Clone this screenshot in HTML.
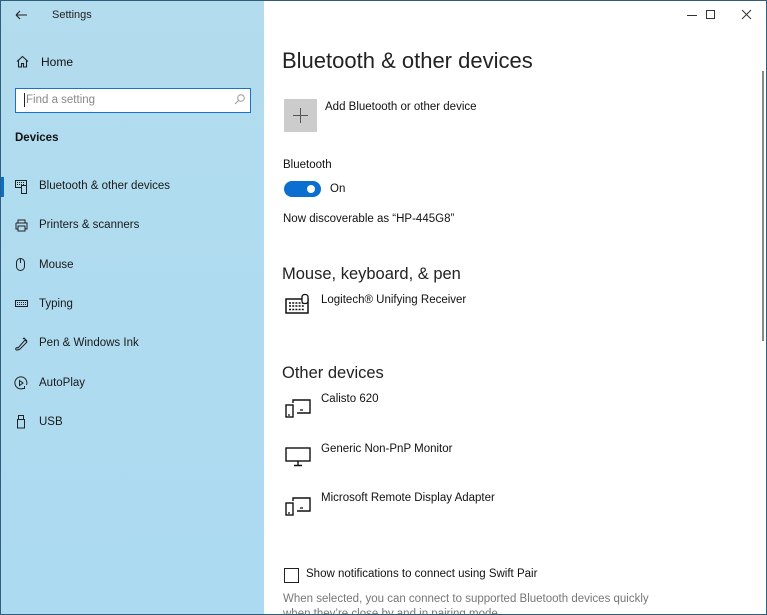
<!DOCTYPE html>
<html><head><meta charset="utf-8"><style>
*{margin:0;padding:0;box-sizing:border-box}
html,body{width:767px;height:615px;overflow:hidden;background:#fff;font-family:"Liberation Sans",sans-serif;color:#000}
#win{position:absolute;left:0;top:0;width:767px;height:615px;border:1px solid #2f5d7c;overflow:hidden}
#side{position:absolute;left:0;top:0;width:263px;height:613px;background:linear-gradient(180deg,#b3dcee 0%,#aedbf0 60%,#acdaf0 100%)}
#main{position:absolute;left:263px;top:0;width:502px;height:613px;background:#fff;overflow:hidden}
.t{position:absolute;white-space:nowrap}
.nav{position:absolute;left:38px;font-size:11.5px;color:#1a1a1a}
svg{position:absolute;overflow:visible}
</style></head><body><div id="win">
<div id="side">
  <svg style="left:14px;top:9px" width="12" height="10"><path d="M1 5H12M1 5L5 1M1 5L5 9" stroke="#222" stroke-width="1.1" fill="none"/></svg>
  <div class="t" style="left:51px;top:8px;font-size:11px;color:#222">Settings</div>
  <svg style="left:15px;top:54px" width="13" height="13"><path d="M1 6.5L6.5 1.5L12 6.5M2.5 5V12H5.5V8.5H7.5V12H10.5V5" stroke="#222" stroke-width="1.1" fill="none"/></svg>
  <div class="t" style="left:40px;top:54px;font-size:12px;color:#111">Home</div>
  <div style="position:absolute;left:14px;top:87px;width:236px;height:25px;background:#fff;border:1.5px solid #1a73c9"></div>
  <div style="position:absolute;left:23px;top:92px;width:1px;height:14px;background:#222"></div>
  <div class="t" style="left:25px;top:93px;font-size:11.5px;color:#888">Find a setting</div>
  <svg style="left:233px;top:93px" width="11" height="11"><circle cx="7" cy="4" r="3.3" stroke="#999" fill="none"/><path d="M4.6 6.4L1 10" stroke="#999"/></svg>
  <div class="t" style="left:14px;top:131px;font-size:11.5px;font-weight:bold;color:#111">Devices</div>
  <div style="position:absolute;left:0;top:176px;width:3px;height:20px;background:#0a6fc7"></div>
  <svg style="left:14px;top:179px" width="14" height="14"><rect x="0.5" y="0.5" width="11" height="7" fill="none" stroke="#222"/><path d="M2 2.5h8M2 4.5h8" stroke="#222" stroke-dasharray="1 1"/><rect x="6.5" y="5.5" width="5" height="8" fill="#b3dcee" stroke="#222"/></svg>
  <div class="nav" style="top:179px">Bluetooth &amp; other devices</div>
  <svg style="left:14px;top:218px" width="13" height="13"><path d="M3 4V1H10V4M1 4H12V10H10M3 10H1V4M3 7H10V12H3Z" stroke="#222" fill="none"/></svg>
  <div class="nav" style="top:218px">Printers &amp; scanners</div>
  <svg style="left:15px;top:257px" width="10" height="14"><rect x="0.5" y="0.5" width="8" height="12" rx="4" fill="none" stroke="#222"/><path d="M4.5 1V5" stroke="#222"/></svg>
  <div class="nav" style="top:258px">Mouse</div>
  <svg style="left:14px;top:299px" width="13" height="8"><rect x="0.5" y="0.5" width="12" height="6" fill="none" stroke="#222"/><path d="M2 2.5h9M2 4.5h9" stroke="#222" stroke-dasharray="1 1"/></svg>
  <div class="nav" style="top:297px">Typing</div>
  <svg style="left:13px;top:336px" width="14" height="14"><path d="M2 13C1 11 3 10 4 11L11 3L13 5L6 12C5 13 3 13 2 13M9 2L10 1L13 4" stroke="#222" fill="none"/></svg>
  <div class="nav" style="top:336px">Pen &amp; Windows Ink</div>
  <svg style="left:13px;top:375px" width="14" height="14"><path d="M9 12.5A6 6 0 1 1 12.5 9" stroke="#222" fill="none"/><path d="M5.5 4.5L9 7L5.5 9.5Z" stroke="#222" fill="none"/><path d="M8 12.5H10.5V10" stroke="#222" fill="none"/></svg>
  <div class="nav" style="top:376px">AutoPlay</div>
  <svg style="left:16px;top:414px" width="9" height="14"><rect x="0.5" y="4.5" width="7" height="8.5" fill="none" stroke="#222"/><rect x="1.5" y="0.5" width="5" height="4" fill="none" stroke="#222"/></svg>
  <div class="nav" style="top:415px">USB</div>
</div>
<div id="main">
  <svg style="left:423px;top:14px" width="10" height="2"><path d="M0 0.5H10" stroke="#333"/></svg>
  <svg style="left:442px;top:9px" width="10" height="10"><rect x="0.5" y="0.5" width="8" height="8" fill="none" stroke="#333"/></svg>
  <svg style="left:478px;top:9px" width="10" height="10"><path d="M0 0L9 9M9 0L0 9" stroke="#333"/></svg>
  <div style="position:absolute;left:498px;top:70px;width:2px;height:270px;background:#8a8a8a"></div>
  <div class="t" style="left:18px;top:47px;font-size:22px;color:#222">Bluetooth &amp; other devices</div>
  <div style="position:absolute;left:20px;top:98px;width:33px;height:33px;background:#cccccc"></div>
  <svg style="left:29px;top:107px" width="15" height="15"><path d="M7.5 0V15M0 7.5H15" stroke="#555"/></svg>
  <div class="t" style="left:61px;top:100px;font-size:11.5px;color:#111">Add Bluetooth or other device</div>
  <div class="t" style="left:19px;top:158px;font-size:11.5px;color:#111">Bluetooth</div>
  <div style="position:absolute;left:20px;top:180px;width:37px;height:16px;border-radius:8px;background:#0a6fd0"></div>
  <div style="position:absolute;left:43px;top:184px;width:8px;height:8px;border-radius:50%;background:#fff"></div>
  <div class="t" style="left:66px;top:182px;font-size:11.5px;color:#111">On</div>
  <div class="t" style="left:19px;top:212px;font-size:11.5px;color:#111">Now discoverable as “HP-445G8”</div>
  <div class="t" style="left:18px;top:264px;font-size:16.5px;color:#222">Mouse, keyboard, &amp; pen</div>
  <svg style="left:21px;top:293px" width="26" height="22"><rect x="1" y="5" width="22" height="14" fill="none" stroke="#111" stroke-width="1.5"/><path d="M4 9h15M4 12h15M4 15.5h15" stroke="#111" stroke-width="1.5" stroke-dasharray="2 1.2"/><rect x="17" y="0.5" width="6" height="9" rx="2.5" fill="#fff" stroke="#111" stroke-width="1.3"/></svg>
  <div class="t" style="left:57px;top:293px;font-size:11.5px;color:#111">Logitech® Unifying Receiver</div>
  <div class="t" style="left:18px;top:363px;font-size:16.5px;color:#222">Other devices</div>
  <svg style="left:21px;top:397px" width="26" height="22"><path d="M8 5V2H25V15H12" fill="none" stroke="#111" stroke-width="1.4"/><rect x="1" y="7" width="7" height="12" fill="none" stroke="#111" stroke-width="1.4"/><path d="M3 17h2M15 12h3" stroke="#111" stroke-width="1.3"/></svg>
  <div class="t" style="left:57px;top:392px;font-size:11.5px;color:#111">Calisto 620</div>
  <svg style="left:21px;top:446px" width="26" height="20"><rect x="1" y="1" width="24" height="13" fill="none" stroke="#111" stroke-width="1.4"/><path d="M13 14V18M9 18.5H17" stroke="#111" stroke-width="1.4"/></svg>
  <div class="t" style="left:57px;top:442px;font-size:11.5px;color:#111">Generic Non-PnP Monitor</div>
  <svg style="left:21px;top:495px" width="26" height="22"><path d="M8 5V2H25V15H12" fill="none" stroke="#111" stroke-width="1.4"/><rect x="1" y="7" width="7" height="12" fill="none" stroke="#111" stroke-width="1.4"/><path d="M3 17h2M15 12h3" stroke="#111" stroke-width="1.3"/></svg>
  <div class="t" style="left:57px;top:491px;font-size:11.5px;color:#111">Microsoft Remote Display Adapter</div>
  <div style="position:absolute;left:20px;top:567px;width:15px;height:15px;border:1.5px solid #222;background:#fff"></div>
  <div class="t" style="left:42px;top:567px;font-size:11.5px;color:#111">Show notifications to connect using Swift Pair</div>
  <div class="t" style="left:19px;top:592px;font-size:11.5px;color:#777">When selected, you can connect to supported Bluetooth devices quickly</div>
  <div class="t" style="left:19px;top:607px;font-size:11.5px;color:#777">when they’re close by and in pairing mode.</div>
</div>
</div></body></html>
